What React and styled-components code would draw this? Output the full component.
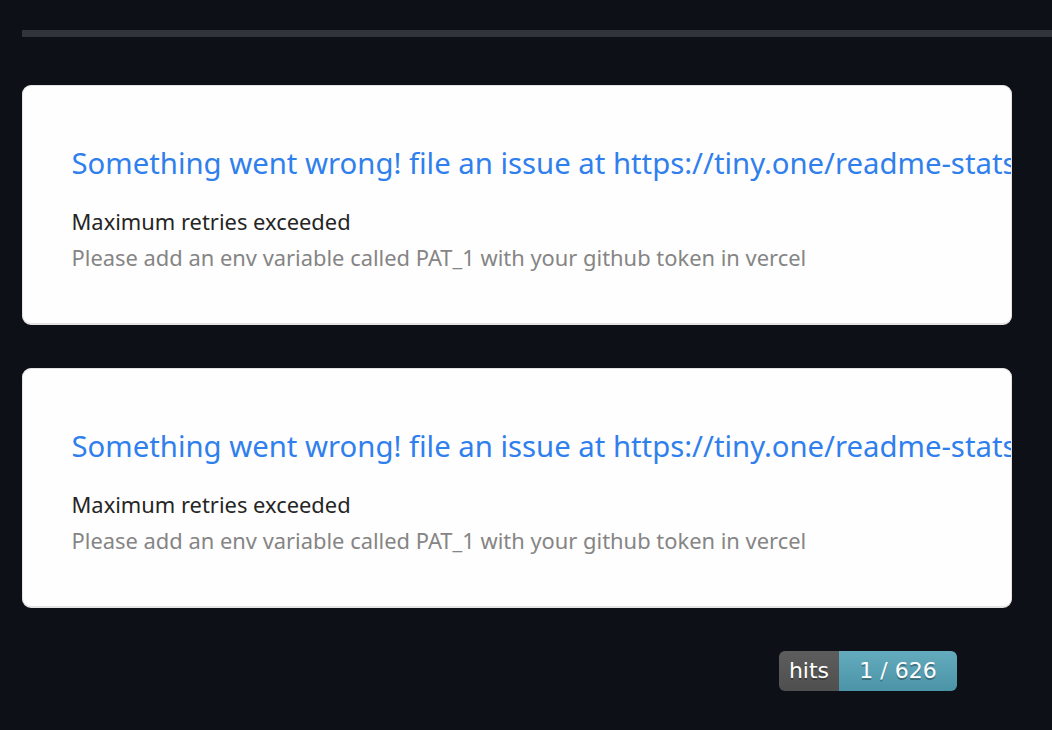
import React from "react";
import styled, { createGlobalStyle } from "styled-components";

const Global = createGlobalStyle`
  html, body { margin: 0; padding: 0; background: #0d1117; }
  body { font-family: "Noto Sans", "Liberation Sans", sans-serif; overflow: hidden; }
`;

const Page = styled.div`
  display: flex;
  flex-direction: column;
  padding: 30px 0 0 22px;
  min-height: 730px;
  box-sizing: border-box;
`;

const Rule = styled.div`
  height: 7px;
  background: #31353b;
  margin-bottom: 48px;
`;

const Cards = styled.div`
  display: flex;
  flex-direction: column;
  gap: 43px;
`;

const Card = styled.div`
  width: 990px;
  height: 240px;
  box-sizing: border-box;
  background: #fffefe;
  border: 1.5px solid #e4e2e2;
  border-bottom-width: 2px;
  border-radius: 9px;
  overflow: hidden;
  padding: 59px 0 0 48.5px;
  display: flex;
  flex-direction: column;
`;

const Title = styled.div`
  font-size: 29.3px;
  line-height: 36px;
  color: #2f80ed;
  white-space: nowrap;
  margin-bottom: 23px;
`;

const Line = styled.div`
  font-size: 21.9px;
  line-height: 36px;
  white-space: nowrap;
  color: ${(p) => (p.$muted ? "#858585" : "#252525")};
`;

const Footer = styled.div`
  display: flex;
  padding-left: 757px;
  margin-top: 43px;
`;

const Badge = styled.div`
  display: flex;
  height: 40px;
  border-radius: 6px;
  overflow: hidden;
  font-family: "DejaVu Sans", Verdana, sans-serif;
  font-size: 22px;
  color: #fff;
`;

const Segment = styled.div`
  display: flex;
  align-items: center;
  justify-content: center;
  width: ${(p) => p.$w}px;
  background: ${(p) => p.$bg};
  text-shadow: 0 2px 0 rgba(1, 1, 1, 0.3);
  padding-bottom: 1px;
  box-sizing: border-box;
`;

const errorCards = [0, 1];

export default function App() {
  return (
    <>
      <Global />
      <Page>
        <Rule />
        <Cards>
          {errorCards.map((i) => (
            <Card key={i}>
              <Title>Something went wrong! file an issue at https://tiny.one/readme-stats</Title>
              <Line>Maximum retries exceeded</Line>
              <Line $muted>Please add an env variable called PAT_1 with your github token in vercel</Line>
            </Card>
          ))}
        </Cards>
        <Footer>
          <Badge>
            <Segment $w={60} $bg="linear-gradient(#5d5d5d, #4f4f4f)">hits</Segment>
            <Segment $w={118} $bg="linear-gradient(#64abbe, #4b93a6)">1 / 626</Segment>
          </Badge>
        </Footer>
      </Page>
    </>
  );
}
